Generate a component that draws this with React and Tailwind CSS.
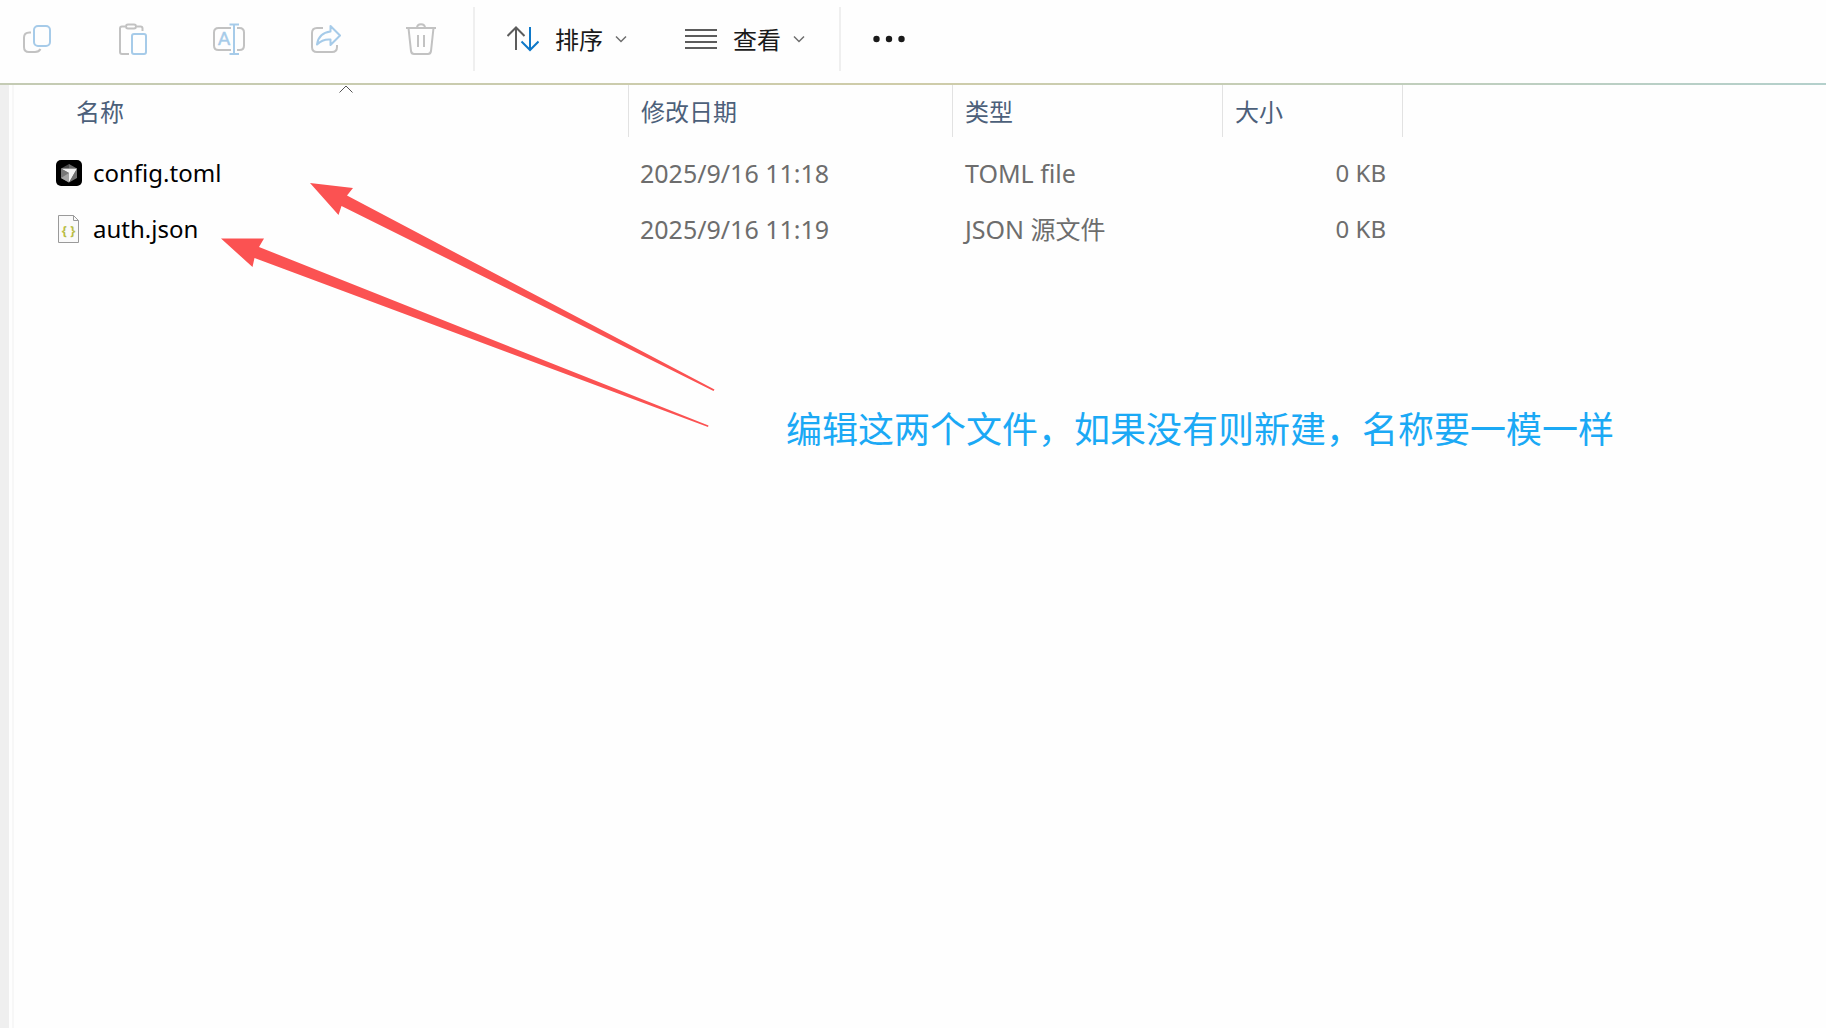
import React from 'react';

const files = [
  { name: 'config.toml', date: '2025/9/16 11:18', type: 'TOML file', size: '0 KB', icon: 'cube' },
  { name: 'auth.json', date: '2025/9/16 11:19', type: 'JSON 源文件', size: '0 KB', icon: 'json' },
];

const CopyIcon = () => (
  <svg width="32" height="32" viewBox="0 -1 32 32" fill="none" strokeWidth="2">
    <path d="M10 8.5 H8.5 C5 8.5 3 10 3 13.5 V23 C3 26 4.5 28 8 28 H14 C17 28 18.5 27 19.5 25" stroke="#c2c2c2" />
    <rect x="13" y="2" width="16" height="20" rx="4" stroke="#a6cbe9" />
  </svg>
);

const PasteIcon = () => (
  <svg width="32" height="32" viewBox="0 -1 32 32" fill="none" strokeWidth="2">
    <path d="M8 2.5 H5 C3.5 2.5 3 3 3 4.5 V28 C3 29.5 3.5 30 5 30 H12 M20 2.5 H23.5 C25 2.5 25.5 3 25.5 4.5 V7" stroke="#c2c2c2" />
    <rect x="9" y="0.5" width="10" height="4" rx="2" stroke="#c2c2c2" />
    <rect x="15" y="10" width="14" height="20" rx="2" stroke="#a6cbe9" />
  </svg>
);

const RenameIcon = () => (
  <svg width="32" height="32" viewBox="0 -1 32 32" fill="none" strokeWidth="2">
    <path d="M18 4 H5.5 C2 4 1 6 1 8.5 V21.5 C1 25 3 26 5.5 26 H18 M24 4 H26.5 C29.5 4 31 6 31 8.5 V21.5 C31 24.5 29 26 26.5 26 H24" stroke="#c2c2c2" />
    <path d="M21 0 V30 M16.5 0.5 H26 M16.5 30 H26" stroke="#a6cbe9" />
    <text x="11" y="21" textAnchor="middle" fontSize="18" fontFamily="Lato, sans-serif" fill="#a6cbe9" stroke="#a6cbe9" strokeWidth="0.5">A</text>
  </svg>
);

const ShareIcon = () => (
  <svg width="32" height="32" viewBox="0 -1 32 32" fill="none" strokeWidth="2" strokeLinejoin="round">
    <path d="M14 4 H8 C4.5 4 3 6 3 9 V23 C3 26.5 5 28 8 28 H23 C26.5 28 28 26 28 23 V21" stroke="#c2c2c2" />
    <path d="M21.5 2 L31 11.5 L21.5 21 V15.5 C16 15 12 16.5 8 20.5 C9 13 13.5 8.5 21.5 7.5 Z" stroke="#a6cbe9" />
  </svg>
);

const TrashIcon = () => (
  <svg width="32" height="32" viewBox="0 -1 32 32" fill="none" stroke="#c2c2c2" strokeWidth="2">
    <path d="M1 4 H31 M12 4 C12 -1 20 -1 20 4 M3.5 4 L6 27 C6.3 29 7 30 9 30 H23 C25 30 25.7 29 26 27 L28.5 4 M13 11 V23 M19 11 V23" />
  </svg>
);

const SortIcon = () => (
  <svg width="32" height="32" viewBox="0 0 32 32" fill="none" strokeWidth="2">
    <path d="M9 27 V5 M0.5 13 L9 4.5 L17.5 13" stroke="#5c5c5c" />
    <path d="M23 4 V26 M14.5 18.5 L23 27 L31.5 18.5" stroke="#0f78c8" />
  </svg>
);

const ViewIcon = () => (
  <svg width="32" height="32" viewBox="0 0 32 32" stroke="#5c5c5c" strokeWidth="2">
    <path d="M0 7 H32 M0 13 H32 M0 19 H32 M0 25 H32" />
  </svg>
);

const Chevron = () => (
  <svg width="12" height="8" viewBox="0 0 12 8" fill="none" stroke="#6e6e6e" strokeWidth="1.5">
    <path d="M1 1.5 L6 6.5 L11 1.5" />
  </svg>
);

const FileIcon = ({ kind }) => {
  if (kind === 'cube') {
    return (
      <svg width="26" height="28" viewBox="0 0 26 28">
        <rect x="0" y="1" width="26" height="26" rx="5" fill="#000" />
        <path d="M13 5 L5 9.5 H13 Z" fill="#4a4a4a" />
        <path d="M13 5 L21 9.5 H13 Z" fill="#6a6a6a" />
        <path d="M5 9.5 L13 14 V23.5 L5 19 Z" fill="#777" />
        <path d="M5 19 L13 14 V23.5 Z" fill="#a5a5a5" />
        <path d="M21 9.5 V19 L13 23.5 Z" fill="#6f6f6f" />
        <path d="M5 9.5 H21 L13 23.5 V14 Z" fill="#f2f2f2" />
      </svg>
    );
  }
  return (
    <svg width="26" height="28" viewBox="0 0 26 28">
      <path d="M2.5 0.5 H17.5 L22.5 5.5 V27.5 H2.5 Z" fill="#fafafa" stroke="#9a9a9a" />
      <path d="M17.5 0.5 V5.5 H22.5" fill="none" stroke="#9a9a9a" />
      <text x="12.5" y="20" textAnchor="middle" fontSize="13" fontWeight="700" fontFamily="Noto Sans, sans-serif" fill="#b9bd45">{'{ }'}</text>
    </svg>
  );
};

const actions = [
  { label: '复制', Icon: CopyIcon },
  { label: '粘贴', Icon: PasteIcon },
  { label: '重命名', Icon: RenameIcon },
  { label: '共享', Icon: ShareIcon },
  { label: '删除', Icon: TrashIcon },
];

const Toolbar = () => (
  <div role="toolbar" className="flex items-center bg-[#fefefe] pt-[7px] pb-3 pl-[13px]">
    <div className="flex gap-12">
      {actions.map(({ label, Icon }) => (
        <button key={label} aria-label={label} className="flex h-16 w-12 items-center justify-center">
          <Icon />
        </button>
      ))}
    </div>
    <div className="ml-7 h-16 w-0.5 bg-[#efefef]" />
    <button className="ml-8 flex h-16 items-center">
      <SortIcon />
      <span className="mr-3 ml-4 pt-0.5">排序</span>
      <Chevron />
    </button>
    <button className="ml-[58px] flex h-16 items-center">
      <ViewIcon />
      <span className="mr-3 ml-4 pt-0.5">查看</span>
      <Chevron />
    </button>
    <div className="ml-[34px] h-16 w-0.5 bg-[#efefef]" />
    <button aria-label="更多" className="ml-8 flex h-16 items-center">
      <svg width="32" height="8" viewBox="0 0 32 8" fill="#1a1a1a">
        <circle cx="3.5" cy="4" r="3.2" />
        <circle cx="16" cy="4" r="3.2" />
        <circle cx="28.5" cy="4" r="3.2" />
      </svg>
    </button>
  </div>
);

const HeaderCell = ({ children }) => (
  <th className="p-0 pb-2 align-top font-normal">
    <div className="h-[52px] border-l border-[#e2e2e2] pt-[9px] pl-3">{children}</div>
  </th>
);

const FileTable = () => (
  <table className="w-full table-fixed border-separate border-spacing-0 text-left">
    <colgroup>
      <col className="w-[614px]" />
      <col className="w-[324px]" />
      <col className="w-[270px]" />
      <col className="w-[180px]" />
      <col />
    </colgroup>
    <thead className="text-[#4c607a]">
      <tr>
        <th className="p-0 pb-2 pl-[50px] align-top font-normal">
          <div className="relative h-[52px] pt-[9px] pl-3">
            名称
            <svg className="absolute top-0 left-1/2 -translate-x-1/2" width="14" height="8" viewBox="0 0 14 8" fill="none" stroke="#555">
              <path d="M0.5 7.5 L7 1 L13.5 7.5" />
            </svg>
          </div>
        </th>
        <HeaderCell>修改日期</HeaderCell>
        <HeaderCell>类型</HeaderCell>
        <HeaderCell>大小</HeaderCell>
        <HeaderCell />
      </tr>
    </thead>
    <tbody className="text-[25px] text-[#6d6d6d]">
      {files.map((file) => (
        <tr key={file.name} className="h-14">
          <td className="p-0 pl-[42px] text-[24px] text-black">
            <div className="flex items-center gap-[11px]">
              <FileIcon kind={file.icon} />
              {file.name}
            </div>
          </td>
          <td className="p-0 pl-3">{file.date}</td>
          <td className="p-0 pl-[13px]">{file.type}</td>
          <td className="p-0 pr-4 text-right text-[24px]">{file.size}</td>
          <td />
        </tr>
      ))}
    </tbody>
  </table>
);

// Arrows and note drawn on top of the file list
const Annotation = () => (
  <>
    <svg className="pointer-events-none absolute top-0 left-0" width="740" height="440" viewBox="0 0 740 440" fill="#fb5252">
      <path d="M310 183 L353 188 L347 195.5 L714.5 389.5 L713.5 391 L341.5 206 L338.5 215 Z" />
      <path d="M221 238.5 L264 238.5 L259 247 L708.5 425.5 L708 427 L254.5 258 L252.5 267 Z" />
    </svg>
    <p className="absolute top-[404px] left-[786px] text-[36px] leading-[52px] whitespace-nowrap text-[#1ba9f5]">
      编辑这两个文件，如果没有则新建，名称要一模一样
    </p>
  </>
);

const App = () => (
  <div className="relative flex min-h-screen flex-col bg-[#fefefe] font-['Noto_Sans','Noto_Sans_CJK_SC',sans-serif] text-[24px] leading-9 text-[#1a1a1a]">
    <Toolbar />
    <div className="h-0.5 bg-linear-to-r from-[#c4cbb4] via-[#cfcca9] to-[#b4d0cc]" />
    <div className="flex flex-1">
      <div className="w-[9px] bg-[#efefef]" />
      <main className="ml-[3px] flex-1 border-l-2 border-[#f7f7f7]">
        <FileTable />
      </main>
    </div>
    <Annotation />
  </div>
);

export default App;
